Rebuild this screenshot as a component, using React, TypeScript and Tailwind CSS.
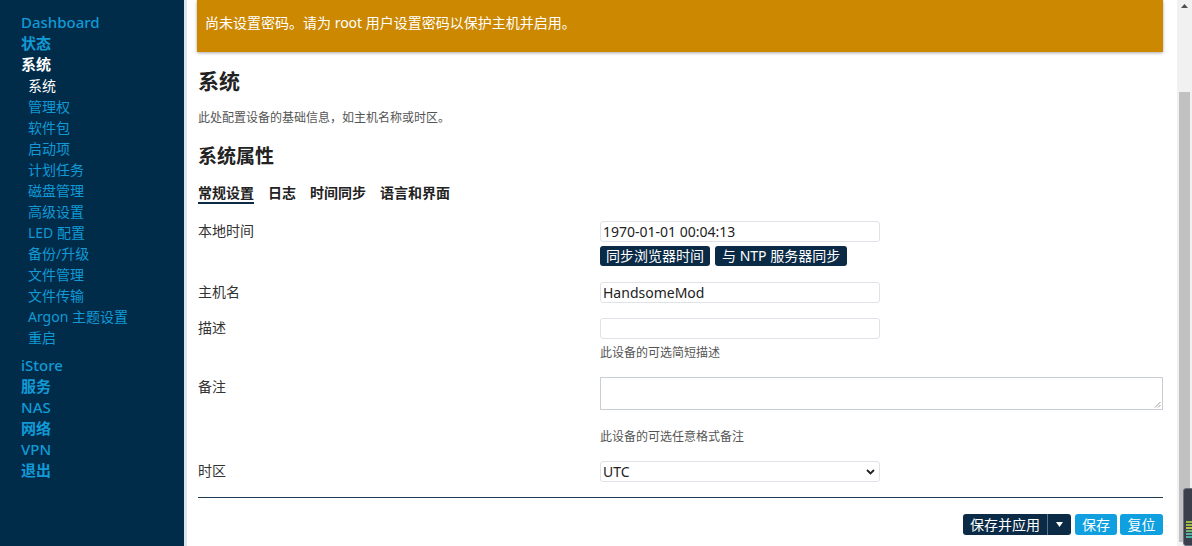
import React from "react";

const FONT = { fontFamily: '"Noto Sans", "Noto Sans CJK SC", sans-serif' };

const subItems = [
  "管理权",
  "软件包",
  "启动项",
  "计划任务",
  "磁盘管理",
  "高级设置",
  "LED 配置",
  "备份/升级",
  "文件管理",
  "文件传输",
  "Argon 主题设置",
  "重启",
];

const bottomItems: { label: string; latin?: boolean }[] = [
  { label: "iStore", latin: true },
  { label: "服务" },
  { label: "NAS", latin: true },
  { label: "网络" },
  { label: "VPN", latin: true },
  { label: "退出" },
];

function Sidebar() {
  return (
    <aside className="w-[187px] shrink-0 bg-[#002b49] border-r-[3px] border-[#dde5ec] pl-[21px] pt-[12px] text-[#119ad6]">
      <div className="leading-[21px] text-[15px] font-medium">Dashboard</div>
      <div className="leading-[21px] text-[15px] font-bold">状态</div>
      <div className="leading-[21px] text-[15px] font-bold text-white">系统</div>
      <ul className="pl-[7px] text-[14px]">
        <li className="leading-[21px] text-white">系统</li>
        {subItems.map((s) => (
          <li key={s} className="leading-[21px]">
            {s}
          </li>
        ))}
      </ul>
      <ul className="mt-[7px] text-[15px]">
        {bottomItems.map((b) => (
          <li key={b.label} className={`leading-[21px] ${b.latin ? "font-medium" : "font-bold"}`}>
            {b.label}
          </li>
        ))}
      </ul>
    </aside>
  );
}

function NavyButton({ children, className = "" }: { children: React.ReactNode; className?: string }) {
  return (
    <button className={`h-[20px] rounded-[3px] bg-[#0a2a46] px-[6px] text-[14px] leading-[20px] text-white ${className}`}>
      {children}
    </button>
  );
}

function TextInput({ value = "", className = "w-[280px]" }: { value?: string; className?: string }) {
  return (
    <div className={`h-[21px] rounded-[3px] border border-[#dfe3e8] bg-white px-[2px] text-[14px] leading-[19px] text-[#222] ${className}`}>
      {value}
    </div>
  );
}

function Row({ label, children, className = "" }: { label: string; children: React.ReactNode; className?: string }) {
  return (
    <div className={`flex ${className}`}>
      <div className="w-[402px] shrink-0 text-[14px] leading-[20px] text-[#333]">{label}</div>
      <div className="flex-1">{children}</div>
    </div>
  );
}

function Main() {
  return (
    <main className="relative flex-1 pl-[10px] pr-[14px] text-[#222]">
      <div className="h-[52px] bg-[#cc8800] pl-[8px] text-[14px] leading-[45px] text-white shadow-[0_1px_3px_rgba(0,0,0,0.35)]">
        尚未设置密码。请为 root 用户设置密码以保护主机并启用。
      </div>
      <div className="pl-[1px]">
        <h2 className="mt-[15px] text-[21px] font-bold leading-[28px] text-[#222]">系统</h2>
        <p className="mt-[14px] text-[12px] leading-[18px] text-[#555]">此处配置设备的基础信息，如主机名称或时区。</p>
        <h3 className="mt-[16px] text-[19px] font-bold leading-[26px] text-[#222]">系统属性</h3>
        <div className="mt-[15px] flex gap-[14px] text-[14px] font-semibold leading-[18px] text-[#222]">
          <span className="border-b-2 border-[#0a2a46]">常规设置</span>
          <span>日志</span>
          <span>时间同步</span>
          <span>语言和界面</span>
        </div>

        <div className="mt-[17px]">
          <Row label="本地时间">
            <TextInput value="1970-01-01 00:04:13" />
            <div className="mt-[4px] flex gap-[5px]">
              <NavyButton>同步浏览器时间</NavyButton>
              <NavyButton className="px-[7px]">与 NTP 服务器同步</NavyButton>
            </div>
          </Row>
          <Row label="主机名" className="mt-[16px]">
            <TextInput value="HandsomeMod" />
          </Row>
          <Row label="描述" className="mt-[15px]">
            <TextInput />
            <div className="mt-[6px] text-[12px] leading-[16px] text-[#555]">此设备的可选简短描述</div>
          </Row>
          <Row label="备注" className="mt-[16px]">
            <div className="relative h-[33px] w-full border border-[#c9ced4] bg-white">
              <svg className="absolute bottom-[1px] right-[1px]" width="7" height="7" viewBox="0 0 7 7">
                <path d="M6.5 1 L1 6.5 M6.5 4 L4 6.5" stroke="#999" strokeWidth="1" />
              </svg>
            </div>
            <div className="mt-[19px] text-[12px] leading-[16px] text-[#555]">此设备的可选任意格式备注</div>
          </Row>
          <Row label="时区" className="mt-[16px]">
            <div className="flex h-[21px] w-[280px] items-center justify-between rounded-[3px] border border-[#dfe3e8] bg-white pl-[2px] pr-[4px] text-[14px] text-[#222]">
              <span className="leading-[19px]">UTC</span>
              <svg width="9" height="6" viewBox="0 0 9 6">
                <path d="M1 1 L4.5 4.5 L8 1" stroke="#222" strokeWidth="1.8" fill="none" />
              </svg>
            </div>
          </Row>
        </div>

        <div className="mt-[15px] border-t border-[#1f3b55]" />

        <div className="mt-[16px] flex justify-end">
          <div className="flex h-[21px] overflow-hidden rounded-[3px] bg-[#0a2a46] text-[14px] leading-[21px] text-white">
            <span className="px-[7px]">保存并应用</span>
            <span className="flex w-[24px] items-center justify-center border-l border-[#5a7288]">
              <svg width="7" height="5" viewBox="0 0 7 5">
                <path d="M0 0 H7 L3.5 5 Z" fill="#fff" />
              </svg>
            </span>
          </div>
          <button className="ml-[4px] h-[21px] w-[42px] rounded-[3px] bg-[#10a0e0] text-[14px] leading-[21px] text-white">保存</button>
          <button className="ml-[3px] h-[21px] w-[43px] rounded-[3px] bg-[#10a0e0] text-[14px] leading-[21px] text-white">复位</button>
        </div>
      </div>
    </main>
  );
}

function Scrollbar() {
  return (
    <div className="relative flex w-[15px] shrink-0 flex-col items-start bg-[#f1f1f1]">
      <svg className="ml-[4px] mt-[4px]" width="7" height="4" viewBox="0 0 7 4">
        <path d="M0 4 L3.5 0 L7 4 Z" fill="#505050" />
      </svg>
      <div className="ml-[2px] mt-[84px] h-[450px] w-[11px] bg-[#c1c1c1]" />
      <div className="absolute bottom-0 left-[6px] h-[58px] w-[12px] rounded-l-[3px] border border-[#6b7280] bg-[#3a3f4b] p-[2px]">
        <div className="mt-[30px] flex flex-col gap-[1px]">
          <div className="h-[2px] bg-[#9bb84a]" />
          <div className="h-[2px] bg-[#9bb84a]" />
          <div className="h-[2px] bg-[#b9c64a]" />
          <div className="h-[2px] bg-[#6fb27a]" />
          <div className="h-[2px] bg-[#4fb0a0]" />
          <div className="h-[2px] bg-[#4fb0a0]" />
        </div>
      </div>
    </div>
  );
}

export default function App() {
  return (
    <div className="flex h-[546px] w-[1192px] overflow-hidden bg-white" style={FONT}>
      <Sidebar />
      <Main />
      <Scrollbar />
    </div>
  );
}
